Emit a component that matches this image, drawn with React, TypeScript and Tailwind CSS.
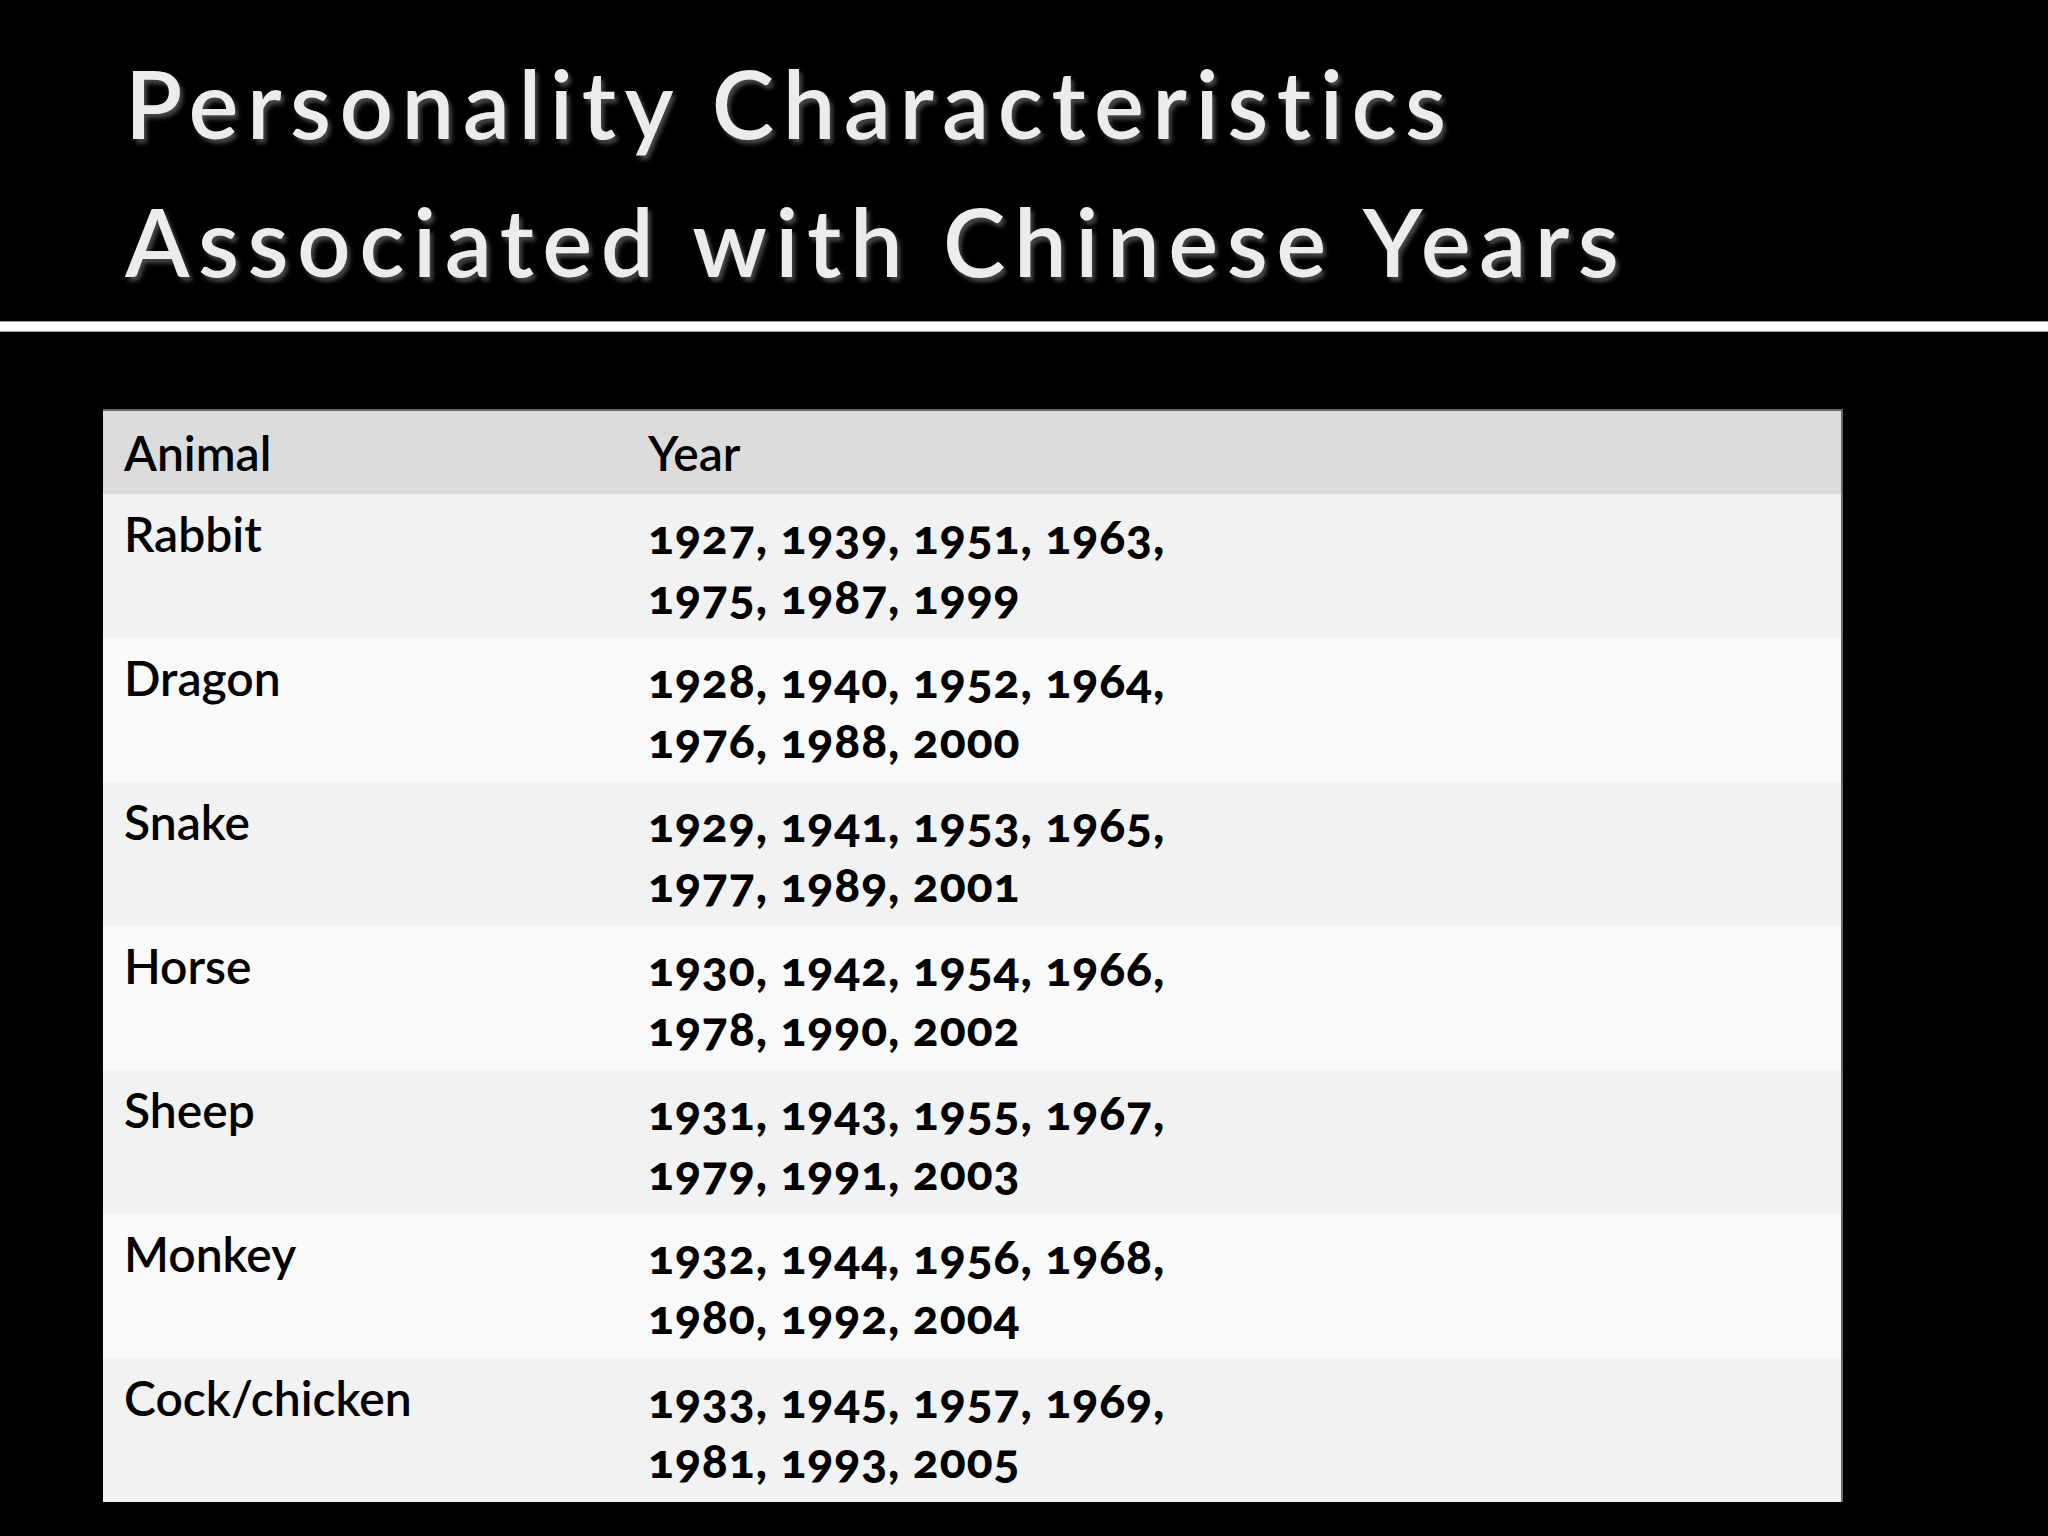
import React from "react";

const rows = [
  { animal: "Rabbit", years: ["1927, 1939, 1951, 1963,", "1975, 1987, 1999"] },
  { animal: "Dragon", years: ["1928, 1940, 1952, 1964,", "1976, 1988, 2000"] },
  { animal: "Snake", years: ["1929, 1941, 1953, 1965,", "1977, 1989, 2001"] },
  { animal: "Horse", years: ["1930, 1942, 1954, 1966,", "1978, 1990, 2002"] },
  { animal: "Sheep", years: ["1931, 1943, 1955, 1967,", "1979, 1991, 2003"] },
  { animal: "Monkey", years: ["1932, 1944, 1956, 1968,", "1980, 1992, 2004"] },
  { animal: "Cock/chicken", years: ["1933, 1945, 1957, 1969,", "1981, 1993, 2005"] },
];

export default function App() {
  return (
    <div className="h-screen w-full bg-black overflow-hidden font-['Lato','Open_Sans',sans-serif]">
      {/* Title */}
      <div className="h-[321px] pl-[125px] pt-[34px]">
        <h1 className="text-[94px] leading-[138px] font-semibold tracking-[8.5px] text-[#ececec] [text-shadow:3px_4px_4px_rgba(120,120,120,0.6)]">
          Personality Characteristics
          <br />
          Associated with Chinese Years
        </h1>
      </div>
      <div className="h-[11px] bg-white border-y border-[#999]" />

      {/* Table */}
      <div className="mt-[77px] ml-[103px] w-[1740px] border-t-2 border-r-2 border-[#666]">
        <div className="grid grid-cols-[524px_1fr] h-[83px] bg-[#dcdcdc] items-center px-[21px] text-[48px] text-black font-semibold">
          <div>Animal</div>
          <div>Year</div>
        </div>
        {rows.map((r, i) => (
          <div
            key={r.animal}
            className={`grid grid-cols-[524px_1fr] h-[144px] px-[21px] pt-[10px] text-[48px] text-black ${
              i % 2 === 0 ? "bg-[#f2f2f2]" : "bg-[#f9f9f9]"
            }`}
          >
            <div className="font-semibold leading-[60px]">{r.animal}</div>
            <div className="font-black leading-[60px] pt-[2px] tracking-[1px] oldstyle-nums">
              {r.years[0]}
              <br />
              {r.years[1]}
            </div>
          </div>
        ))}
      </div>
    </div>
  );
}
